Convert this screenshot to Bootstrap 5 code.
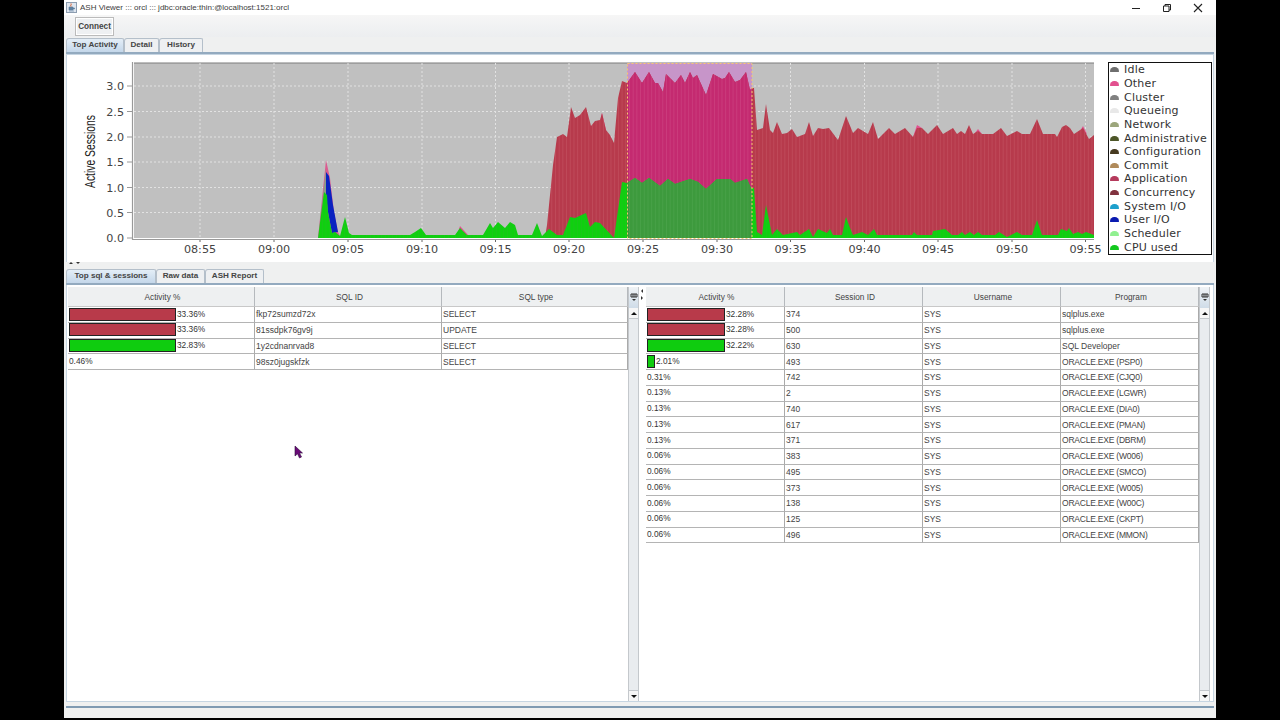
<!DOCTYPE html>
<html lang="en">
<head>
<meta charset="utf-8">
<title>ASH Viewer</title>
<link href="https://cdn.jsdelivr.net/npm/bootstrap@5.3.0/dist/css/bootstrap.min.css" rel="stylesheet">
<style>
html,body{height:100%;margin:0;background:#000;overflow:hidden}
body{font-family:"Liberation Sans",Arial,sans-serif;color:#333}
.app-win{width:1152px;height:718px;margin:0 auto;background:#eff0f0;display:flex;flex-direction:column}
.title-bar{height:15px;background:#fff;font-size:8px;color:#3c3c3c;padding-left:2px;gap:3px;flex:none}
.win-ctrls{margin-left:auto;display:flex;gap:21px;padding-right:13px}
.win-ctrls svg{display:block}
.tool-bar{height:22px;flex:none;background:linear-gradient(#f6f6f6,#eceef0);padding:2px 0 1px 2px;gap:3px}
.grip{width:6px;background-image:radial-gradient(#aaa 35%,transparent 40%);background-size:2px 2px}
.conn-btn{width:39px;height:19px;padding:0;border:1px solid #bbb;border-radius:0;background:#eef0f2;font:bold 8.2px "Liberation Sans",sans-serif;color:#444;box-shadow:inset 0 0 0 1px #fff}
.tab-row{flex:none;display:flex;align-items:flex-end;padding-left:2px;height:15px;background:#eff0f0}
.tab-a{height:14px;padding-bottom:1px;display:flex;align-items:center;justify-content:center;font-size:8.1px;font-weight:bold;color:#444;background:#eef0f2;border:1px solid #b4bfca;border-bottom:0;border-radius:3px 2px 0 0}
.tab-a.on{background:linear-gradient(#e4eef7,#c4d7ea)}
.tab-line{flex:none;height:2px;margin:0 2px;background:#93aabf}
.chart-pane{flex:none;height:208px;margin:0 2px;background:#fff;border-top:1px solid #c6d5e2;border-left:1px solid #c6d5e2;border-right:1px solid #c6d5e2;display:flex;align-items:flex-start}
.chart-pane svg{display:block;flex:none}
.chart-pane text{font-family:"DejaVu Sans",sans-serif;font-size:11.200px;fill:#444}
.chart-pane text.y-title{font-family:"Liberation Sans",sans-serif;font-size:15px;fill:#222}
.legend-box{width:104px;height:193px;margin-top:7px;border:1px solid #111;display:flex;flex-direction:column;justify-content:space-around;background:#fff;flex:none}
.legend-row{display:flex;align-items:center;font-family:"DejaVu Sans",sans-serif;font-size:11px;letter-spacing:.2px;line-height:13px;color:#333;padding-left:1px;gap:5px;white-space:nowrap}
.legend-dome{width:9px;height:5px;border-radius:5px 5px 1px 1px;flex:none}
.split-h{flex:none;height:6px;margin:0 2px;position:relative;background-image:radial-gradient(#c4c4c4 35%,transparent 40%);background-size:2px 2px;background-position:0 1px}
.lower-pane{flex:1;min-height:0;margin:0 2px;background:#fff;border:1px solid #c6d5e2;border-top:0;display:flex;padding:2px 3px 0 1px}
.tbl-side{display:flex;min-width:0}
.tbl-left{width:571px}
.tbl-right{flex:1}
.tbl-holder{flex:1;min-width:0;overflow:hidden}
.tbl-holder .data-tbl{display:block;width:100%;margin:0;--bs-table-bg:transparent;font-size:8.5px;color:#444}
.data-tbl thead,.data-tbl tbody{display:block}
.data-tbl tr{display:flex}
.data-tbl thead tr{height:20px}
.data-tbl tbody tr{height:15.75px}
.data-tbl th{display:flex;align-items:center;justify-content:center;padding:1px 0 0 3px;font-weight:normal;color:#444;background:#eef0f1;border:0;border-right:1px solid #b5b9bd;border-bottom:1px solid #c8c8c8;font-size:8.3px}
.data-tbl td{display:flex;align-items:center;padding:1px 0 0 1px;line-height:13px;border:0;border-right:1px solid #aaa;border-bottom:1px solid #b4b4b4;white-space:nowrap;overflow:hidden;font-size:8.5px;color:#444}
.data-tbl td.bar-cell{padding:0;align-items:flex-start}
.col-3a{width:187px;flex:none}
.col-3c{width:186px;flex:none}
.col-4a{width:139px;flex:none}
.col-4b{width:138px;flex:none}
.data-tbl td.upper-cell{letter-spacing:-.22px}
.bar-wrap{display:flex;align-items:center;height:14px;color:#333;padding-left:1px;font-size:8.3px}
.bar-wrap span{line-height:13px;margin-left:1px}
.bar-wrap span:first-child{margin-left:0}
.act-bar{display:block;height:13px;border:1px solid #222;flex:none;margin:0}
.act-red{background:#b83a4a}
.act-green{background:#0fcc0f}
.scroll-col{width:11px;flex:none;display:flex;flex-direction:column;background:#e9ecef;border-left:1px solid #c4c8cc;border-right:1px solid #c4c8cc}
.scroll-corner{height:21px;flex:none;background:linear-gradient(#f0f3f6,#cfdce8);display:flex;align-items:center;justify-content:center}
.scroll-btn{height:11px;flex:none;background:#f6f6f6;display:flex;align-items:center;justify-content:center;border-bottom:1px solid #c4c8cc}
.scroll-btn.dn{border-bottom:0;border-top:1px solid #c4c8cc}
.scroll-track{flex:1}
.split-v{width:7px;flex:none;position:relative;padding-left:3px;background-image:radial-gradient(#bdbdbd 35%,transparent 40%);background-size:2px 2px;background-origin:content-box;background-clip:content-box}
.arrow-up{width:0;height:0;border-left:3.500px solid transparent;border-right:3.500px solid transparent;border-bottom:3.500px solid #111}
.arrow-dn{width:0;height:0;border-left:3.500px solid transparent;border-right:3.500px solid transparent;border-top:3.500px solid #111}
.foot-lines{flex:none;height:16px;background:#eff0f0;padding-top:4px}
.foot-lines div{height:2px;margin:0 2px;background:#7f9ab2}
.split-marks{position:absolute;left:3px;top:0;display:flex;gap:3px}
.split-marks-v{position:absolute;left:2px;top:2px;display:flex;flex-direction:column;gap:3px}
.mini-l{width:0;height:0;border-top:2.500px solid transparent;border-bottom:2.500px solid transparent;border-right:2.500px solid #333}
.mini-r{width:0;height:0;border-top:2.500px solid transparent;border-bottom:2.500px solid transparent;border-left:2.500px solid #333}
.mini-u{width:0;height:0;border-left:2.500px solid transparent;border-right:2.500px solid transparent;border-bottom:2.500px solid #333}
.mini-d{width:0;height:0;border-left:2.500px solid transparent;border-right:2.500px solid transparent;border-top:2.500px solid #333}
.mouse-ptr{position:absolute;left:294px;top:445px}
</style>
</head>
<body>
<div class="app-win">
  <div class="title-bar d-flex align-items-center">
    <svg width="11" height="11" viewBox="0 0 11 11"><rect x=".5" y=".5" width="10" height="10" fill="#dfe6ef" stroke="#8d9db0"/><path d="M3 9h5M3 5h4v3H3zM7 6h1.500v1H7" fill="#5f7f9f" stroke="#5f7f9f" stroke-width=".6"/><path d="M5 1.500c1 1-1 1.500 0 3" fill="none" stroke="#d9531e"/></svg>
    <span>ASH Viewer ::: orcl ::: jdbc:oracle:thin:@localhost:1521:orcl</span>
    <div class="win-ctrls">
      <svg width="10" height="10" viewBox="0 0 10 10"><path d="M1 5.500h8" stroke="#222"/></svg>
      <svg width="10" height="10" viewBox="0 0 10 10" fill="none" stroke="#222"><path d="M1.500 3h5.500v5.500H1.500zM3 3V1.500h5.500V7H7"/></svg>
      <svg width="10" height="10" viewBox="0 0 10 10" stroke="#222" stroke-width="1.100"><path d="M1 1l8 8M9 1l-8 8"/></svg>
    </div>
  </div>
  <div class="tool-bar d-flex">
    <div class="grip"></div>
    <button class="conn-btn" type="button">Connect</button>
  </div>
  <div class="tab-row">
    <div class="tab-a on" style="width:58px">Top Activity</div>
    <div class="tab-a" style="width:35px">Detail</div>
    <div class="tab-a" style="width:44px">History</div>
  </div>
  <div class="tab-line"></div>
  <div class="chart-pane">
    <svg width="1041" height="207" viewBox="67 55 1041 207">
      <defs>
        <pattern id="pRed" width="3.7" height="10" patternUnits="userSpaceOnUse"><rect width="3.7" height="10" fill="#b73a4c"/><rect width=".8" height="10" fill="#c04c5c"/></pattern>
        <pattern id="pMag" width="3.7" height="10" patternUnits="userSpaceOnUse"><rect width="3.7" height="10" fill="#c42a70"/><rect width=".8" height="10" fill="#cb3f7e"/></pattern>
        <pattern id="pGrn" width="3.7" height="10" patternUnits="userSpaceOnUse"><rect width="3.7" height="10" fill="#3d9a3d"/><rect width=".8" height="10" fill="#4aa24a"/></pattern>
        <pattern id="pLime" width="3.7" height="10" patternUnits="userSpaceOnUse"><rect width="3.7" height="10" fill="#0fd00f"/><rect width=".8" height="10" fill="#1cc41c"/></pattern>
        <clipPath id="hiClip"><rect x="627" y="63" width="125" height="175"/></clipPath>
        <polygon id="redShape" points="545,238 547,225 553,165 557,137 563,134 567,137 571,107 575,118 580,115 586,107 591,126 595,121 600,120 602,113 606,130 610,135 614,143 618,98 622,81 627,83 635,72 642,83 649,72 655,83 658,83 663,92 666,74 675,83 681,75 685,83 690,72 693,78 697,75 706,95 713,74 722,79 725,78 729,72 735,82 740,80 746,72 750,90 752,88 754,88 757,130 763,128 766,104 770,130 773,133 777,122 782,134 787,133 792,129 797,137 805,134 809,122 813,136 818,128 823,129 829,128 838,140 846,116 853,133 858,128 868,134 873,122 878,139 883,134 889,128 895,134 905,128 913,137 917,128 922,128 928,134 937,125 943,134 953,128 957,134 961,131 965,134 969,125 973,134 978,131 982,134 993,134 1001,128 1007,136 1017,131 1022,134 1030,134 1037,119 1043,134 1055,134 1057,137 1062,127 1066,125 1070,128 1074,134 1083,128 1089,139 1094,135 1094,238"/>
        <polygon id="grnShape" points="318,238 324,192 327,195 328,212 332,233 335,232 340,236 345,217 349,233 352,235 410,235 415,232 421,228 426,235 455,235 460,228 467,235 483,235 490,223 493,228 498,222 505,228 510,222 515,225 518,235 532,235 537,223 542,236 549,229 557,235 563,235 570,217 575,218 586,213 590,227 595,222 600,223 614,238 622,182 627,183 635,178 642,183 649,178 660,186 668,179 675,184 690,179 698,182 706,189 717,179 730,179 735,183 747,179 751,188 754,188 757,232 762,235 766,205 772,235 777,229 783,235 797,232 800,235 809,229 813,237 818,229 827,233 830,229 833,235 842,235 846,217 850,228 853,235 862,232 868,235 874,229 877,235 912,235 914,232 917,235 932,235 933,231 945,229 952,235 958,235 962,232 965,235 970,232 974,235 978,232 982,235 995,235 999,232 1007,237 1017,232 1022,235 1032,235 1037,220 1042,235 1058,235 1061,229 1067,231 1069,228 1073,234 1078,232 1082,234 1086,232 1094,235 1094,238"/>
      </defs>
      <rect x="134" y="63" width="960" height="175" fill="#c0c0c0"/>
      <path d="M134 63H1094" stroke="#7c7c7c" stroke-width="1.200"/>
      <g stroke="#e2e2e2" stroke-width="1" stroke-dasharray="2 2" fill="none">
        <path d="M134 86H1094M134 111.500H1094M134 137H1094M134 162H1094M134 187.500H1094M134 212.500H1094"/>
        <path d="M200 63V238M274 63V238M348 63V238M422 63V238M495.500 63V238M569 63V238M643 63V238M717 63V238M790.500 63V238M864.500 63V238M938 63V238M1012 63V238M1085.500 63V238"/>
      </g>
      <rect x="627" y="63" width="125" height="175" fill="#c795c9"/>
      <polygon points="458,232 460,226 468,235 460,235" fill="#e2508f"/>
      <polygon points="600,122 602,113 606,130 603,130" fill="#e2508f"/>
      <polygon points="913,137 917,125 922,128 919,134" fill="#e2508f"/>
      <polygon points="975,133 978,129 982,134" fill="#e2508f"/>
      <polygon points="1080,131 1083,126 1087,134" fill="#e2508f"/>
      <use href="#redShape" fill="url(#pRed)"/>
      <use href="#redShape" fill="url(#pMag)" clip-path="url(#hiClip)"/>
      <polygon points="318,238 326,160 330,178 334,212 338,232 340,236" fill="#dc5a90"/>
      <polygon points="326,172 329,176 333,205 338,232 332,233 328,212 326,195" fill="#0a22c0"/>
      <polygon points="318,238 326,168 326,195 324,192" fill="#8a9a88"/>
      <use href="#grnShape" fill="url(#pLime)"/>
      <use href="#grnShape" fill="url(#pGrn)" clip-path="url(#hiClip)"/>
      <rect x="627.500" y="63.500" width="124.500" height="175" fill="none" stroke="#f7c76c" stroke-dasharray="2 2"/>
      <g stroke="#999" fill="none">
        <path d="M132.500 62V240M132 239.500H1094" stroke-width="1.200"/>
        <path d="M127 86H132M127 111.500H132M127 137H132M127 162H132M127 187.500H132M127 212.500H132M127 238H132"/>
      </g>
      <g stroke="#666">
        <path d="M200 240v2M274 240v2M348 240v2M422 240v2M495.500 240v2M569 240v2M643 240v2M717 240v2M790.500 240v2M864.500 240v2M938 240v2M1012 240v2M1085.500 240v2"/>
      </g>
      <g text-anchor="end">
        <text x="124" y="90">3.0</text><text x="124" y="115.500">2.5</text><text x="124" y="141">2.0</text><text x="124" y="166">1.5</text><text x="124" y="191.500">1.0</text><text x="124" y="216.500">0.5</text><text x="124" y="242">0.0</text>
      </g>
      <g text-anchor="middle">
        <text x="200" y="253">08:55</text><text x="274" y="253">09:00</text><text x="348" y="253">09:05</text><text x="422" y="253">09:10</text><text x="495.500" y="253">09:15</text><text x="569" y="253">09:20</text><text x="643" y="253">09:25</text><text x="717" y="253">09:30</text><text x="790.500" y="253">09:35</text><text x="864.500" y="253">09:40</text><text x="938" y="253">09:45</text><text x="1012" y="253">09:50</text><text x="1085.500" y="253">09:55</text>
      </g>
      <text class="y-title" transform="translate(95 188) rotate(-90)" textLength="73" lengthAdjust="spacingAndGlyphs">Active Sessions</text>
    </svg>
    <div class="legend-box">
      <div class="legend-row"><i class="legend-dome" style="background:#6e6e6e"></i>Idle</div>
      <div class="legend-row"><i class="legend-dome" style="background:#e2508f"></i>Other</div>
      <div class="legend-row"><i class="legend-dome" style="background:#808080"></i>Cluster</div>
      <div class="legend-row"><i class="legend-dome" style="background:#e8e8e8"></i>Queueing</div>
      <div class="legend-row"><i class="legend-dome" style="background:#9ca67c"></i>Network</div>
      <div class="legend-row"><i class="legend-dome" style="background:#4d5628"></i>Administrative</div>
      <div class="legend-row"><i class="legend-dome" style="background:#463a20"></i>Configuration</div>
      <div class="legend-row"><i class="legend-dome" style="background:#b08a5a"></i>Commit</div>
      <div class="legend-row"><i class="legend-dome" style="background:#b53a5c"></i>Application</div>
      <div class="legend-row"><i class="legend-dome" style="background:#80323e"></i>Concurrency</div>
      <div class="legend-row"><i class="legend-dome" style="background:#1ea0cc"></i>System I/O</div>
      <div class="legend-row"><i class="legend-dome" style="background:#0a1ab0"></i>User I/O</div>
      <div class="legend-row"><i class="legend-dome" style="background:#90f090"></i>Scheduler</div>
      <div class="legend-row"><i class="legend-dome" style="background:#12c81e"></i>CPU used</div>
    </div>
  </div>
  <div class="split-h"><div class="split-marks"><div class="mini-u"></div><div class="mini-d"></div></div></div>
  <div class="tab-row">
    <div class="tab-a on" style="width:90px">Top sql &amp; sessions</div>
    <div class="tab-a" style="width:49px">Raw data</div>
    <div class="tab-a" style="width:59px">ASH Report</div>
  </div>
  <div class="tab-line"></div>
  <div class="lower-pane">
    <div class="tbl-side tbl-left">
      <div class="tbl-holder">
        <table class="table data-tbl">
          <thead><tr><th class="col-3a">Activity %</th><th class="col-3a">SQL ID</th><th class="col-3c">SQL type</th></tr></thead>
          <tbody>
            <tr><td class="bar-cell col-3a"><div class="bar-wrap"><i class="act-bar act-red" style="width:107px"></i><span>33.36%</span></div></td><td class="col-3a">fkp72sumzd72x</td><td class="col-3c">SELECT</td></tr>
            <tr><td class="bar-cell col-3a"><div class="bar-wrap"><i class="act-bar act-red" style="width:107px"></i><span>33.36%</span></div></td><td class="col-3a">81ssdpk76gv9j</td><td class="col-3c">UPDATE</td></tr>
            <tr><td class="bar-cell col-3a"><div class="bar-wrap"><i class="act-bar act-green" style="width:107px"></i><span>32.83%</span></div></td><td class="col-3a">1y2cdnanrvad8</td><td class="col-3c">SELECT</td></tr>
            <tr><td class="bar-cell col-3a"><div class="bar-wrap"><span>0.46%</span></div></td><td class="col-3a">98sz0jugskfzk</td><td class="col-3c">SELECT</td></tr>
          </tbody>
        </table>
      </div>
      <div class="scroll-col">
        <div class="scroll-corner"><svg width="8" height="9" viewBox="0 0 8 9" fill="none" stroke="#333"><path d="M1 1h6v3H1zM3 1v3M5 1v3"/><path d="M2 6h4L4 8z" fill="#333" stroke="none"/></svg></div>
        <div class="scroll-btn"><div class="arrow-up"></div></div>
        <div class="scroll-track"></div>
        <div class="scroll-btn dn"><div class="arrow-dn"></div></div>
      </div>
    </div>
    <div class="split-v"><div class="split-marks-v"><div class="mini-l"></div><div class="mini-r"></div></div></div>
    <div class="tbl-side tbl-right">
      <div class="tbl-holder">
        <table class="table data-tbl">
          <thead><tr><th class="col-4a">Activity %</th><th class="col-4b">Session ID</th><th class="col-4b">Username</th><th class="col-4b">Program</th></tr></thead>
          <tbody>
            <tr><td class="bar-cell col-4a"><div class="bar-wrap"><i class="act-bar act-red" style="width:78px"></i><span>32.28%</span></div></td><td class="col-4b">374</td><td class="col-4b">SYS</td><td class="col-4b">sqlplus.exe</td></tr>
            <tr><td class="bar-cell col-4a"><div class="bar-wrap"><i class="act-bar act-red" style="width:78px"></i><span>32.28%</span></div></td><td class="col-4b">500</td><td class="col-4b">SYS</td><td class="col-4b">sqlplus.exe</td></tr>
            <tr><td class="bar-cell col-4a"><div class="bar-wrap"><i class="act-bar act-green" style="width:78px"></i><span>32.22%</span></div></td><td class="col-4b">630</td><td class="col-4b">SYS</td><td class="col-4b">SQL Developer</td></tr>
            <tr><td class="bar-cell col-4a"><div class="bar-wrap"><i class="act-bar act-green" style="width:8px"></i><span>2.01%</span></div></td><td class="col-4b">493</td><td class="col-4b">SYS</td><td class="col-4b upper-cell">ORACLE.EXE (PSP0)</td></tr>
            <tr><td class="bar-cell col-4a"><div class="bar-wrap"><span>0.31%</span></div></td><td class="col-4b">742</td><td class="col-4b">SYS</td><td class="col-4b upper-cell">ORACLE.EXE (CJQ0)</td></tr>
            <tr><td class="bar-cell col-4a"><div class="bar-wrap"><span>0.13%</span></div></td><td class="col-4b">2</td><td class="col-4b">SYS</td><td class="col-4b upper-cell">ORACLE.EXE (LGWR)</td></tr>
            <tr><td class="bar-cell col-4a"><div class="bar-wrap"><span>0.13%</span></div></td><td class="col-4b">740</td><td class="col-4b">SYS</td><td class="col-4b upper-cell">ORACLE.EXE (DIA0)</td></tr>
            <tr><td class="bar-cell col-4a"><div class="bar-wrap"><span>0.13%</span></div></td><td class="col-4b">617</td><td class="col-4b">SYS</td><td class="col-4b upper-cell">ORACLE.EXE (PMAN)</td></tr>
            <tr><td class="bar-cell col-4a"><div class="bar-wrap"><span>0.13%</span></div></td><td class="col-4b">371</td><td class="col-4b">SYS</td><td class="col-4b upper-cell">ORACLE.EXE (DBRM)</td></tr>
            <tr><td class="bar-cell col-4a"><div class="bar-wrap"><span>0.06%</span></div></td><td class="col-4b">383</td><td class="col-4b">SYS</td><td class="col-4b upper-cell">ORACLE.EXE (W006)</td></tr>
            <tr><td class="bar-cell col-4a"><div class="bar-wrap"><span>0.06%</span></div></td><td class="col-4b">495</td><td class="col-4b">SYS</td><td class="col-4b upper-cell">ORACLE.EXE (SMCO)</td></tr>
            <tr><td class="bar-cell col-4a"><div class="bar-wrap"><span>0.06%</span></div></td><td class="col-4b">373</td><td class="col-4b">SYS</td><td class="col-4b upper-cell">ORACLE.EXE (W005)</td></tr>
            <tr><td class="bar-cell col-4a"><div class="bar-wrap"><span>0.06%</span></div></td><td class="col-4b">138</td><td class="col-4b">SYS</td><td class="col-4b upper-cell">ORACLE.EXE (W00C)</td></tr>
            <tr><td class="bar-cell col-4a"><div class="bar-wrap"><span>0.06%</span></div></td><td class="col-4b">125</td><td class="col-4b">SYS</td><td class="col-4b upper-cell">ORACLE.EXE (CKPT)</td></tr>
            <tr><td class="bar-cell col-4a"><div class="bar-wrap"><span>0.06%</span></div></td><td class="col-4b">496</td><td class="col-4b">SYS</td><td class="col-4b upper-cell">ORACLE.EXE (MMON)</td></tr>
          </tbody>
        </table>
      </div>
      <div class="scroll-col">
        <div class="scroll-corner"><svg width="8" height="9" viewBox="0 0 8 9" fill="none" stroke="#333"><path d="M1 1h6v3H1zM3 1v3M5 1v3"/><path d="M2 6h4L4 8z" fill="#333" stroke="none"/></svg></div>
        <div class="scroll-btn"><div class="arrow-up"></div></div>
        <div class="scroll-track"></div>
        <div class="scroll-btn dn"><div class="arrow-dn"></div></div>
      </div>
    </div>
  </div>
  <div class="foot-lines"><div></div></div>
</div>
<svg class="mouse-ptr" width="9" height="14" viewBox="0 0 9 14"><path d="M1 1v10l2.500-2.200L5.500 13l2-1-2-4H8.500z" fill="#6a0a78" stroke="#2d0a3a" stroke-width=".6"/></svg>
</body>
</html>
